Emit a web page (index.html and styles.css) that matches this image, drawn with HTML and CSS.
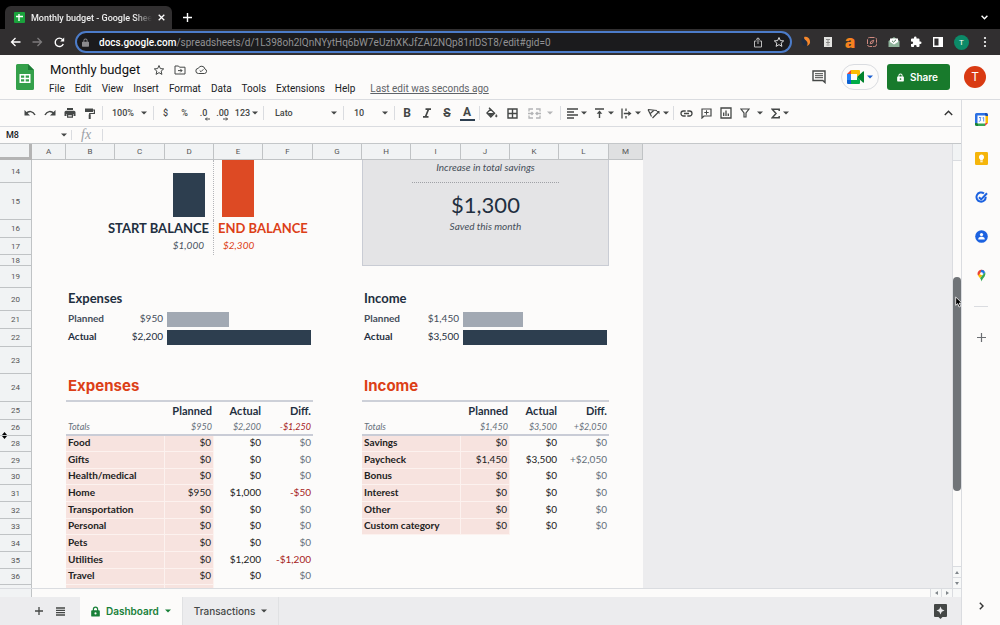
FILE: index.html
```
<!DOCTYPE html>
<html lang="en">
<head>
  <meta charset="UTF-8">
  <meta name="viewport" content="width=device-width, initial-scale=1.0">
  <title>Monthly budget - Google Sheets</title>
  <link rel="stylesheet" href="styles.css">
</head>
<body>
  <svg class="sprite" aria-hidden="true">
    <symbol id="caret" viewBox="0 0 6 4"><path d="M0 0.5h6L3 3.5z"/></symbol>
    <symbol id="lock" viewBox="0 0 10 12"><path fill-rule="evenodd" d="M1.2 4.6H2V3.4a3 3 0 0 1 6 0v1.2h.8a1 1 0 0 1 1 1v5a1 1 0 0 1-1 1H1.2a1 1 0 0 1-1-1v-5a1 1 0 0 1 1-1zM3.3 4.6h3.4V3.4a1.7 1.7 0 0 0-3.4 0zM5 6.9a1.2 1.2 0 1 0 0 2.4 1.2 1.2 0 0 0 0-2.4z"/></symbol>
    <symbol id="star" viewBox="0 0 24 24"><path d="M12 3l2.7 6.2 6.7.6-5.1 4.4 1.5 6.6-5.8-3.5-5.8 3.5 1.5-6.6L2.600 9.800l6.700-.6z" fill="none" stroke="currentColor" stroke-width="2"/></symbol>
  </svg>

  <!-- Browser -->
  <div class="tabstrip">
    <div class="browser-tab">
      <svg width="11" height="11" viewBox="0 0 11 11"><rect width="11" height="11" rx="1" fill="#1aa23c"/><path d="M5 2v7M2 4.500h7" stroke="#fff" stroke-width="1.400"/></svg>
      <span class="tab-title">Monthly budget - Google Shee</span>
      <button class="plain" aria-label="Close tab"><svg width="7" height="7" viewBox="0 0 7 7"><path d="M.7.7l5.600 5.600M6.300.7L.7 6.300" stroke="#fff" stroke-width="1.300"/></svg></button>
    </div>
    <button class="plain new-tab" aria-label="New tab"><svg width="9" height="9" viewBox="0 0 9 9"><path d="M4.500 0v9M0 4.500h9" stroke="#fff" stroke-width="1.400"/></svg></button>
    <button class="plain tab-search" aria-label="Search tabs"><svg width="7" height="5" viewBox="0 0 7 5"><path d="M.6.8l2.900 2.900L6.400.8" fill="none" stroke="#fff" stroke-width="1.400"/></svg></button>
  </div>
  <div class="browser-bar">
    <button class="plain nav" aria-label="Back"><svg width="11" height="10" viewBox="0 0 11 10"><path d="M10.500 5H1.500M5.500 1l-4 4 4 4" fill="none" stroke="#fff" stroke-width="1.300"/></svg></button>
    <button class="plain nav" aria-label="Forward"><svg width="11" height="10" viewBox="0 0 11 10"><path d="M.5 5h9M5.500 1l4 4-4 4" fill="none" stroke="#7d7b7c" stroke-width="1.300"/></svg></button>
    <button class="plain nav" aria-label="Reload"><svg width="11" height="11" viewBox="0 0 11 11"><path d="M9.300 7A4.200 4.200 0 1 1 8.600 2.600" fill="none" stroke="#fff" stroke-width="1.400"/><path d="M10.200.5v4H6.200z" fill="#fff"/></svg></button>
    <div class="omnibox">
      <svg width="7" height="9" viewBox="0 0 10 12" fill="#8b8b8d"><path fill-rule="evenodd" d="M1 5h1V3.400a3 3 0 0 1 6 0V5h1a1 1 0 0 1 1 1v5a1 1 0 0 1-1 1H1a1 1 0 0 1-1-1V6a1 1 0 0 1 1-1zm2.300 0h3.400V3.400a1.700 1.700 0 0 0-3.400 0z"/></svg>
      <span class="url"><b>docs.google.com</b>/spreadsheets/d/1L398oh2lQnNYytHq6bW7eUzhXKJfZAl2NQp81rlDST8/edit#gid=0</span>
      <button class="plain" aria-label="Share page"><svg width="10" height="11" viewBox="0 0 10 11" fill="none" stroke="#bbb"><path d="M3.500 4H1.500v6h7V4h-2M5 7V1M3 2.700L5 .8l2 1.900"/></svg></button>
      <button class="plain" aria-label="Bookmark"><svg width="12" height="12" color="#ddd"><use href="#star"/></svg></button>
    </div>
    <div class="extensions">
      <svg width="12" height="12" viewBox="0 0 12 12"><path d="M4 1.500a4.500 4.500 0 0 0 2 8.500L7 6z" fill="#1f2c40"/><path d="M4.500.8a4.800 4.800 0 0 1 2.500 9.200c1-2.500.8-4-1-5.500S3.500 2 4.500.8z" fill="#f6872b"/></svg>
      <svg width="12" height="12" viewBox="0 0 12 12"><path d="M2 1h8v10H2z" fill="#e4e4e2"/><path d="M4 3.500h4M6 4v4M4 6.500h4M4.500 9h3" stroke="#777" stroke-width=".8"/></svg>
      <span class="ext-a">a</span>
      <svg width="12" height="12" viewBox="0 0 12 12" fill="none" stroke="#d08a80"><rect x="1.500" y="1.500" width="9" height="9" rx="2" stroke-dasharray="5 1"/><path d="M4.200 7.800l.6-2.300 3-1.300-1.300 3z"/></svg>
      <svg width="12" height="12" viewBox="0 0 12 12"><path d="M.5 5L6 1l5.500 4v6H.5z" fill="#8fb49b"/><path d="M2 2.500h8V6L6 8.500 2 6z" fill="#fff"/><path d="M4 4.800l1.500 1.400L8 3.800" fill="none" stroke="#547a61"/></svg>
      <svg width="12" height="12" viewBox="0 0 24 24" fill="#fff"><path d="M20.500 11H19V7a2 2 0 0 0-2-2h-4V3.500a2.500 2.500 0 0 0-5 0V5H4a2 2 0 0 0-2 2v3.800h1.500a2.700 2.700 0 0 1 0 5.400H2V20a2 2 0 0 0 2 2h3.800v-1.500a2.700 2.700 0 0 1 5.400 0V22H17a2 2 0 0 0 2-2v-4h1.500a2.500 2.500 0 0 0 0-5z"/></svg>
      <svg width="12" height="12" viewBox="0 0 12 12"><path d="M1.700 1.700h8.600v8.600H1.700z" fill="none" stroke="#fff" stroke-width="1.400"/><path d="M6.500 1.500H10v9H6.500z" fill="#fff"/></svg>
      <span class="profile">T</span>
      <svg width="12" height="12" viewBox="0 0 12 12" fill="#fff"><circle cx="6" cy="2" r="1.100"/><circle cx="6" cy="6" r="1.100"/><circle cx="6" cy="10" r="1.100"/></svg>
    </div>
  </div>

  <!-- Document header -->
  <header class="doc-header">
    <svg class="logo" width="18" height="26" viewBox="0 0 18 26"><path d="M1.500 0H12l6 6v18.500a1.500 1.500 0 0 1-1.500 1.500h-15A1.500 1.500 0 0 1 0 24.500v-23A1.500 1.500 0 0 1 1.500 0z" fill="#34a04a"/><path d="M12 0l6 6h-6z" fill="#1d7c36"/><path d="M3.500 10h11v9h-11zM5 11.500v2.200h3.200v-2.200zM9.700 11.500v2.200H13v-2.200zM5 15.200v2.300h3.200v-2.300zM9.700 15.200v2.300H13v-2.300z" fill="#fff" fill-rule="evenodd"/></svg>
    <div class="doc-info">
      <div class="title-row">
        <h1>Monthly budget</h1>
        <button class="plain" aria-label="Star"><svg width="12" height="12"><use href="#star"/></svg></button>
        <button class="plain" aria-label="Move"><svg width="12" height="10" viewBox="0 0 12 10" fill="none" stroke="currentColor"><path d="M1 1h3.500l1 1.200H11V9H1zM4 5.600h4M6.300 3.900L8 5.600 6.300 7.300"/></svg></button>
        <button class="plain" aria-label="Saved to Drive"><svg width="13" height="10" viewBox="0 0 13 10" fill="none" stroke="currentColor"><path d="M3.500 8.500h6a2.300 2.300 0 0 0 .4-4.500A3.400 3.400 0 0 0 3.400 3.300a2.600 2.600 0 0 0 .1 5.200zM4.700 5.500L6 6.700l2.400-2.400"/></svg></button>
      </div>
      <nav class="menu">
        <button class="plain">File</button>
        <button class="plain">Edit</button>
        <button class="plain">View</button>
        <button class="plain">Insert</button>
        <button class="plain">Format</button>
        <button class="plain">Data</button>
        <button class="plain">Tools</button>
        <button class="plain">Extensions</button>
        <button class="plain">Help</button>
        <a class="last-edit" href="#">Last edit was seconds ago</a>
      </nav>
    </div>
    <button class="plain" aria-label="Comments"><svg width="14" height="14" viewBox="0 0 14 14"><path d="M1 1h12v11.500L10.800 10.500H1z" fill="none" stroke="#444746" stroke-width="1.400"/><path d="M3 3.700h8M3 5.700h8M3 7.700h8" stroke="#444746"/></svg></button>
    <button class="meet" aria-label="Meet">
      <svg width="18" height="14" viewBox="0 0 18 14"><path d="M0 4l4-4v4z" fill="#e94235"/><path d="M4 0h8a1 1 0 0 1 1 1v3.500L10 7V4H4z" fill="#fbbc04"/><path d="M0 4h4v6H0z" fill="#2684fc"/><path d="M0 10h4v4H1a1 1 0 0 1-1-1z" fill="#0b5fd0"/><path d="M4 10h6V7l3 2.500V13a1 1 0 0 1-1 1H4z" fill="#00ac47"/><path d="M10 7l6-5.500c.5-.4 1-.1 1 .5v10c0 .6-.5.9-1 .5z" fill="#00832d"/></svg>
      <svg class="caret"><use href="#caret"/></svg>
    </button>
    <button class="share"><svg width="7" height="9" fill="#fff"><use href="#lock"/></svg>Share</button>
    <span class="avatar">T</span>
  </header>

  <div class="workspace">
    <main class="editor">
      <div class="toolbar">
        <button class="tool" aria-label="Undo"><svg width="12" height="8" viewBox="0 0 12 8"><path d="M2 4.500C5 1.500 9 2 11 6" fill="none" stroke="#444746" stroke-width="1.500"/><path d="M.5 1v5.500H6z" fill="#444746"/></svg></button>
        <button class="tool" aria-label="Redo"><svg width="12" height="8" viewBox="0 0 12 8"><path d="M10 4.500C7 1.500 3 2 1 6" fill="none" stroke="#444746" stroke-width="1.500"/><path d="M11.500 1v5.500H6z" fill="#444746"/></svg></button>
        <button class="tool" aria-label="Print"><svg width="12" height="12" viewBox="0 0 12 12" fill="#444746"><path d="M3 1h6v2H3zM2 3.700h8a1.500 1.500 0 0 1 1.500 1.500V9H9.500V7h-7v2H.5V5.200A1.500 1.500 0 0 1 2 3.700z"/><path d="M3.600 7.700h4.800v2.500H3.600z" fill="none" stroke="#444746" stroke-width="1.200"/></svg></button>
        <button class="tool" aria-label="Paint format"><svg width="10" height="11" viewBox="0 0 10 11"><path d="M0 .5h8v3.500H0z" fill="#444746"/><path d="M8 2h1.400v3.500H4.700V7" fill="none" stroke="#444746" stroke-width="1.200"/><path d="M3.700 6.500h2V11h-2z" fill="#444746"/></svg></button>
        <span class="sep"></span>
        <label class="drop zoom"><select aria-label="Zoom"><option>100%</option></select><svg class="caret"><use href="#caret"/></svg></label>
        <span class="sep"></span>
        <button class="tool narrow" aria-label="Currency">$</button>
        <button class="tool narrow" aria-label="Percent">%</button>
        <button class="tool narrow decimals" aria-label="Decrease decimals">.0<svg width="6" height="4" viewBox="0 0 6 4"><path d="M6 2H1.500M3 .5L1.500 2 3 3.500" fill="none" stroke="#444746"/></svg></button>
        <button class="tool narrow decimals" aria-label="Increase decimals">.00<svg width="6" height="4" viewBox="0 0 6 4"><path d="M0 2h4.500M3 .5L4.500 2 3 3.500" fill="none" stroke="#444746"/></svg></button>
        <button class="tool formats">123<svg class="caret"><use href="#caret"/></svg></button>
        <span class="sep"></span>
        <label class="drop font"><select aria-label="Font"><option>Lato</option></select><svg class="caret"><use href="#caret"/></svg></label>
        <span class="sep"></span>
        <label class="drop size"><select aria-label="Font size"><option>10</option></select><svg class="caret"><use href="#caret"/></svg></label>
        <span class="sep"></span>
        <button class="tool glyph">B</button>
        <button class="tool" aria-label="Italic"><svg width="10" height="10" viewBox="0 0 10 10"><path d="M3.500 1.200H9M1 8.800h5.500M6.500 1.200L3.500 8.800" stroke="#444746" stroke-width="1.700"/></svg></button>
        <button class="tool glyph strike">S</button>
        <button class="tool glyph"><span class="text-color">A</span></button>
        <span class="sep"></span>
        <button class="tool" aria-label="Fill color"><svg width="12" height="12" viewBox="0 0 12 12"><path d="M3 .8l1.200 1.200M4.600 2.200l4 4-3.800 3.800-4-4z" fill="none" stroke="#444746" stroke-width="1.300"/><path d="M1.500 6h7L4.800 9.600z" fill="#444746"/><path d="M10.300 7.500c1 1.300 1 2.500 0 2.500s-1-1.200 0-2.500z" fill="#444746" stroke="#444746" stroke-width=".6"/></svg></button>
        <button class="tool" aria-label="Borders"><svg width="11" height="11" viewBox="0 0 11 11"><path d="M1 1h9v9H1zM5.500 1v9M1 5.500h9" fill="none" stroke="#444746" stroke-width="1.400"/></svg></button>
        <button class="tool merge" aria-label="Merge cells"><svg width="13" height="11" viewBox="0 0 13 11" fill="none" stroke="#b3b4b6" stroke-width="1.300"><path d="M1 3.500V1h4M8 1h4v2.500M1 7.500V10h4M8 10h4V7.500M0 5.500h4.500M8.500 5.500H13M3.500 4L5 5.500 3.500 7M9.500 4L8 5.500 9.500 7"/></svg><svg class="caret faded"><use href="#caret"/></svg></button>
        <span class="sep"></span>
        <button class="tool menu-tool" aria-label="Horizontal align"><svg width="11" height="11" viewBox="0 0 11 11"><path d="M0 1h11M0 4h7M0 7h11M0 10h7" stroke="#444746" stroke-width="1.300"/></svg><svg class="caret"><use href="#caret"/></svg></button>
        <button class="tool menu-tool" aria-label="Vertical align"><svg width="11" height="11" viewBox="0 0 11 11"><path d="M1 1h9M5.500 10V4.500" stroke="#444746" stroke-width="1.400"/><path d="M5.500 2.500L8.300 5.700H2.700z" fill="#444746"/></svg><svg class="caret"><use href="#caret"/></svg></button>
        <button class="tool menu-tool" aria-label="Text wrapping"><svg width="11" height="11" viewBox="0 0 11 11"><path d="M1 .5v10M5 .5V3M5 8v2.500M2.800 5.500h6" stroke="#444746" stroke-width="1.300"/><path d="M7.300 3L10.500 5.500 7.300 8z" fill="#444746"/></svg><svg class="caret"><use href="#caret"/></svg></button>
        <button class="tool menu-tool" aria-label="Text rotation"><svg width="13" height="11" viewBox="0 0 13 11"><path d="M1 1.500l9 1M1 1.500L4.500 8.500M7 2.200L3 5.700M5.500 10l6-6" fill="none" stroke="#444746" stroke-width="1.200"/><path d="M12.500 3v3.200L9.300 3z" fill="#444746"/></svg><svg class="caret"><use href="#caret"/></svg></button>
        <span class="sep"></span>
        <button class="tool" aria-label="Insert link"><svg width="13" height="7" viewBox="0 0 13 7"><path d="M5.700 1H3.500a2.500 2.500 0 0 0 0 5h2.200M7.300 1h2.200a2.500 2.500 0 0 1 0 5H7.300M4 3.500h5" fill="none" stroke="#444746" stroke-width="1.300"/></svg></button>
        <button class="tool" aria-label="Insert comment"><svg width="11" height="11" viewBox="0 0 11 11"><path d="M1 1h9v7H3L1 10z" fill="none" stroke="#444746" stroke-width="1.200"/><path d="M5.500 2.300v4.400M3.300 4.500h4.400" stroke="#444746"/></svg></button>
        <button class="tool" aria-label="Insert chart"><svg width="12" height="12" viewBox="0 0 12 12"><path d="M1 1h10v10H1z" fill="none" stroke="#444746" stroke-width="1.300"/><path d="M3.700 9V5.500M6 9V3.500M8.300 9V6.500" stroke="#444746" stroke-width="1.300"/></svg></button>
        <button class="tool filter" aria-label="Filter"><svg width="10" height="10" viewBox="0 0 10 10"><path d="M1 1h8L6 5v4H4V5z" fill="none" stroke="#444746" stroke-width="1.200"/></svg><svg class="caret"><use href="#caret"/></svg></button>
        <button class="tool menu-tool" aria-label="Functions"><svg width="9" height="11" viewBox="0 0 9 11"><path d="M8.200 3V1.200H1.200L5 5.500 1.200 9.800h7V8" fill="none" stroke="#444746" stroke-width="1.500"/></svg><svg class="caret"><use href="#caret"/></svg></button>
        <button class="tool collapse" aria-label="Hide menus"><svg width="9" height="6" viewBox="0 0 9 6"><path d="M.8 5L4.500 1.300 8.200 5" fill="none" stroke="#333" stroke-width="1.400"/></svg></button>
      </div>

      <div class="formula-bar">
        <label class="name-box"><input type="text" value="M8" aria-label="Name box"><svg class="caret"><use href="#caret"/></svg></label>
        <label class="fx" for="formula">fx</label>
        <input id="formula" class="formula" type="text">
      </div>

      <div class="sheet">
        <table class="grid">
          <colgroup>
            <col class="c-head"><col class="c-edge"><col class="c-49"><col class="c-50"><col class="c-49"><col class="c-49"><col class="c-50"><col class="c-49"><col class="c-49"><col class="c-50"><col class="c-49"><col class="c-49"><col class="c-50"><col class="c-edge">
          </colgroup>
          <thead>
            <tr><th class="corner"></th><th>A</th><th>B</th><th>C</th><th>D</th><th>E</th><th>F</th><th>G</th><th>H</th><th>I</th><th>J</th><th>K</th><th>L</th><th class="active">M</th></tr>
          </thead>
          <tbody>
            <tr class="h-23"><th>14</th><td></td>
              <td class="column-cell start" colspan="3" rowspan="2"><div class="column start-column"></div></td>
              <td class="column-cell" colspan="2" rowspan="2"><div class="column end-column"></div></td>
              <td></td>
              <td class="savings" colspan="5" rowspan="5">
                <p class="caption">Increase in total savings</p>
                <p class="amount">$1,300</p>
                <p class="caption">Saved this month</p>
              </td><td></td></tr>
            <tr class="h-37"><th>15</th><td></td><td></td><td></td></tr>
            <tr class="h-18"><th>16</th><td></td><td class="balance start" colspan="3">START BALANCE</td><td class="balance end" colspan="2">END BALANCE</td><td></td><td></td></tr>
            <tr class="h-17"><th>17</th><td></td><td class="balance-value start" colspan="3">$1,000</td><td class="balance-value end" colspan="2">$2,300</td><td></td><td></td></tr>
            <tr class="h-11"><th>18</th><td></td><td colspan="5"></td><td></td><td></td></tr>
            <tr class="h-22"><th>19</th><td colspan="13"></td></tr>
            <tr class="h-23"><th>20</th><td></td><td class="subtitle" colspan="5">Expenses</td><td></td><td class="subtitle" colspan="5">Income</td><td></td></tr>
            <tr class="h-18"><th>21</th><td></td>
              <td class="label soft">Planned</td><td class="num soft">$950</td><td class="bar-cell" colspan="3"><div class="bar planned" style="width: 43.2%"></div></td><td></td>
              <td class="label soft">Planned</td><td class="num soft">$1,450</td><td class="bar-cell" colspan="3"><div class="bar planned" style="width: 41.4%"></div></td><td></td></tr>
            <tr class="h-18"><th>22</th><td></td>
              <td class="label dark">Actual</td><td class="num dark">$2,200</td><td class="bar-cell" colspan="3"><div class="bar" style="width: 100%"></div></td><td></td>
              <td class="label dark">Actual</td><td class="num dark">$3,500</td><td class="bar-cell" colspan="3"><div class="bar" style="width: 100%"></div></td><td></td></tr>
            <tr class="h-27"><th>23</th><td colspan="13"></td></tr>
            <tr class="h-28"><th>24</th><td></td><td class="section" colspan="5">Expenses</td><td></td><td class="section" colspan="5">Income</td><td></td></tr>
            <tr class="h-18 heads"><th>25</th><td></td>
              <td colspan="2"></td><td>Planned</td><td>Actual</td><td>Diff.</td><td></td>
              <td colspan="2"></td><td>Planned</td><td>Actual</td><td>Diff.</td><td></td></tr>
            <tr class="h-16 totals"><th><svg class="hidden-mark" viewBox="0 0 5 3" preserveAspectRatio="xMidYMax"><path d="M0 3h5L2.500 0z"/></svg>26</th><td class="none"></td>
              <td class="name" colspan="2">Totals</td><td>$950</td><td>$2,200</td><td class="neg">-$1,250</td><td class="none"></td>
              <td class="name" colspan="2">Totals</td><td>$1,450</td><td>$3,500</td><td>+$2,050</td><td class="none"></td></tr>
            <tr class="h-16"><th><svg class="hidden-mark" viewBox="0 0 5 3" preserveAspectRatio="xMidYMin"><path d="M0 0h5L2.500 3z"/></svg>28</th><td></td>
              <td class="cat" colspan="2">Food</td><td class="plan">$0</td><td class="num">$0</td><td class="diff">$0</td><td></td>
              <td class="cat" colspan="2">Savings</td><td class="plan">$0</td><td class="num">$0</td><td class="diff">$0</td><td></td></tr>
            <tr class="h-17"><th>29</th><td></td>
              <td class="cat" colspan="2">Gifts</td><td class="plan">$0</td><td class="num">$0</td><td class="diff">$0</td><td></td>
              <td class="cat" colspan="2">Paycheck</td><td class="plan">$1,450</td><td class="num">$3,500</td><td class="diff">+$2,050</td><td></td></tr>
            <tr class="h-16"><th>30</th><td></td>
              <td class="cat" colspan="2">Health/medical</td><td class="plan">$0</td><td class="num">$0</td><td class="diff">$0</td><td></td>
              <td class="cat" colspan="2">Bonus</td><td class="plan">$0</td><td class="num">$0</td><td class="diff">$0</td><td></td></tr>
            <tr class="h-17"><th>31</th><td></td>
              <td class="cat" colspan="2">Home</td><td class="plan">$950</td><td class="num">$1,000</td><td class="diff neg">-$50</td><td></td>
              <td class="cat" colspan="2">Interest</td><td class="plan">$0</td><td class="num">$0</td><td class="diff">$0</td><td></td></tr>
            <tr class="h-17"><th>32</th><td></td>
              <td class="cat" colspan="2">Transportation</td><td class="plan">$0</td><td class="num">$0</td><td class="diff">$0</td><td></td>
              <td class="cat" colspan="2">Other</td><td class="plan">$0</td><td class="num">$0</td><td class="diff">$0</td><td></td></tr>
            <tr class="h-16"><th>33</th><td></td>
              <td class="cat" colspan="2">Personal</td><td class="plan">$0</td><td class="num">$0</td><td class="diff">$0</td><td></td>
              <td class="cat" colspan="2">Custom category</td><td class="plan">$0</td><td class="num">$0</td><td class="diff">$0</td><td></td></tr>
            <tr class="h-17"><th>34</th><td></td><td class="cat" colspan="2">Pets</td><td class="plan">$0</td><td class="num">$0</td><td class="diff">$0</td><td colspan="7"></td></tr>
            <tr class="h-17"><th>35</th><td></td><td class="cat" colspan="2">Utilities</td><td class="plan">$0</td><td class="num">$1,200</td><td class="diff neg">-$1,200</td><td colspan="7"></td></tr>
            <tr class="h-16"><th>36</th><td></td><td class="cat" colspan="2">Travel</td><td class="plan">$0</td><td class="num">$0</td><td class="diff">$0</td><td colspan="7"></td></tr>
            <tr class="h-16"><th></th><td></td><td class="cat" colspan="2"></td><td class="plan"></td><td colspan="9"></td></tr>
          </tbody>
        </table>
        <div class="v-scroll">
          <div class="v-top"></div>
          <div class="track"><div class="before"></div><div class="thumb"></div><div class="after"></div></div>
          <button class="arrow" aria-label="Scroll up"><svg width="4" height="3" viewBox="0 0 4 3"><path d="M0 3h4L2 0z"/></svg></button>
          <button class="arrow" aria-label="Scroll down"><svg width="4" height="3" viewBox="0 0 4 3"><path d="M0 0h4L2 3z"/></svg></button>
        </div>
        <svg class="pointer" width="8" height="12" viewBox="0 0 8 12"><path d="M.7 1v8.300l2-1.700 1.400 3.400 1.600-.7-1.400-3.200H7z" fill="#000" stroke="#fff" stroke-width=".8"/></svg>
      </div>
      <div class="h-scroll">
        <div class="h-head"></div>
        <div class="h-track"></div>
        <button class="arrow" aria-label="Scroll left"><svg width="3" height="4" viewBox="0 0 3 4"><path d="M3 0v4L0 2z"/></svg></button>
        <button class="arrow" aria-label="Scroll right"><svg width="3" height="4" viewBox="0 0 3 4"><path d="M0 0v4l3-2z"/></svg></button>
        <div class="h-corner"></div>
      </div>

      <footer class="sheet-tabs">
        <button class="plain" aria-label="Add sheet"><svg width="8" height="8" viewBox="0 0 8 8"><path d="M4 0v8M0 4h8" stroke="#444746" stroke-width="1.300"/></svg></button>
        <button class="plain" aria-label="All sheets"><svg width="9" height="9" viewBox="0 0 9 9"><path d="M0 1h9M0 3.300h9M0 5.700h9M0 8h9" stroke="#444746" stroke-width="1.300"/></svg></button>
        <button class="sheet-tab current"><svg width="9" height="11" fill="#188038"><use href="#lock"/></svg>Dashboard<svg class="caret"><use href="#caret"/></svg></button>
        <button class="sheet-tab">Transactions<svg class="caret"><use href="#caret"/></svg></button>
        <button class="plain explore" aria-label="Explore"><svg width="13" height="15" viewBox="0 0 13 15"><path fill-rule="evenodd" d="M1 0h11a1 1 0 0 1 1 1v11a1 1 0 0 1-1 1H8.500l-2 2-2-2H1a1 1 0 0 1-1-1V1a1 1 0 0 1 1-1zm5.500 2.500L5.300 5.300 2.500 6.500l2.800 1.200 1.200 2.800 1.200-2.800 2.800-1.200-2.800-1.200z" fill="#444746"/></svg></button>
      </footer>
    </main>

    <aside class="side-panel">
      <svg width="13" height="13" viewBox="0 0 13 13"><path d="M0 1.500A1.500 1.500 0 0 1 1.500 0H10v3H3v7H0z" fill="#2b70e4"/><path d="M10 0h1.500A1.500 1.500 0 0 1 13 1.500V3h-3z" fill="#174fb8"/><path d="M10 3h3v7h-3z" fill="#fbbc04"/><path d="M3 10h7v3H3z" fill="#34a853"/><path d="M0 10h3v3H1.500A1.500 1.500 0 0 1 0 11.500z" fill="#188038"/><path d="M10 10h3l-3 3z" fill="#ea4335"/><path d="M2.500 2.500h8v8h-8z" fill="#fff"/><path d="M4 4.500h1.800L5 6.200c1.200.1 1 2.300-1.200 2M7.500 5l1.200-.5v4" fill="none" stroke="#2b70e4" stroke-width=".8"/></svg>
      <svg width="13" height="13" viewBox="0 0 13 13"><rect width="13" height="13" rx="1.200" fill="#f5b50a"/><path d="M6.500 2.500a2.700 2.700 0 0 1 1.300 5V8.500H5.200v-1a2.700 2.700 0 0 1 1.300-5zM5.300 9.200h2.400v1H5.300z" fill="#fff"/></svg>
      <svg width="13" height="13" viewBox="0 0 13 13"><path d="M9 2.500A4.600 4.600 0 1 0 10.700 5.800" fill="none" stroke="#1c62e0" stroke-width="2"/><path d="M4 6.200l2.200 2.200L12 2.200" fill="none" stroke="#1c62e0" stroke-width="2"/></svg>
      <svg width="13" height="13" viewBox="0 0 13 13"><circle cx="6.500" cy="6.500" r="6.300" fill="#1c62e0"/><circle cx="6.500" cy="4.600" r="1.600" fill="#fff"/><path d="M3.300 9.500V8.700c0-1.300 2-1.900 3.200-1.900s3.200.6 3.200 1.900v.8z" fill="#fff"/></svg>
      <svg width="13" height="13" viewBox="0 0 13 13"><path d="M2.500 4.800a4.100 4.100 0 0 0 .6 2L9.400 1.900A4 4 0 0 0 6.500.7a4 4 0 0 0-4 4.100z" fill="#ea4335"/><path d="M6.500.7a4 4 0 0 1 3.700 2.500L7.800 5.500 5.500 2.900z" fill="#1a73e8"/><path d="M10.200 3.200a4.500 4.500 0 0 1-.6 4.300C8.200 9.500 7.300 10 6.500 12.500c-.4-1.500-.8-2.500-1.500-3.400z" fill="#34a853"/><path d="M3.100 6.800L5.300 4l1.900 2.500L5 9.100c-.8-1-1.400-1.400-1.900-2.300z" fill="#fbbc04"/><circle cx="6.500" cy="4.700" r="1.400" fill="#fff"/></svg>
      <hr>
      <button class="plain" aria-label="Get add-ons"><svg width="9" height="9" viewBox="0 0 9 9"><path d="M4.500 0v9M0 4.500h9" stroke="#6b6e72" stroke-width="1.200"/></svg></button>
      <button class="plain hide-panel" aria-label="Hide side panel"><svg width="5" height="8" viewBox="0 0 5 8"><path d="M.8.8L4 4 .8 7.200" fill="none" stroke="#333" stroke-width="1.400"/></svg></button>
    </aside>
  </div>
</body>
</html>
```
FILE: styles.css
```
* {
  box-sizing: border-box;
}
body {
  margin: 0;
  height: 100vh;
  display: flex;
  flex-direction: column;
  overflow: hidden;
  background: #fcfbfa;
  color: #202124;
  font-family: Roboto, sans-serif;
  font-size: 10px;
}
svg {
  display: block;
  flex: none;
}
.sprite {
  position: absolute;
  width: 0;
  height: 0;
}
button, input, select {
  font: inherit;
  color: inherit;
  border: 0;
  margin: 0;
  padding: 0;
  background: none;
}
.plain {
  display: flex;
  align-items: center;
  justify-content: center;
  flex: none;
}
.caret {
  width: 6px;
  height: 4px;
  fill: #444746;
}

/* Browser */
.tabstrip {
  flex: none;
  height: 29px;
  display: flex;
  align-items: center;
  background: #000;
  padding: 6px 12px 0 5px;
}
.browser-tab {
  width: 167px;
  height: 23px;
  display: flex;
  align-items: center;
  gap: 6px;
  padding: 0 8px 0 9px;
  background: #312f30;
  border-radius: 6px 6px 0 0;
  color: #eee;
  font-size: 9px;
  font-weight: 500;
}
.tab-title {
  flex: 1;
  white-space: nowrap;
  -webkit-mask-image: linear-gradient(to right, #000 85%, transparent);
  mask-image: linear-gradient(to right, #000 85%, transparent);
}
.new-tab {
  margin-left: 11px;
}
.tab-search {
  margin-left: auto;
}
.browser-bar {
  flex: none;
  height: 26px;
  display: flex;
  align-items: center;
  background: #312f30;
  padding: 0 9px 0 4px;
}
.nav {
  width: 22px;
}
.omnibox {
  flex: 1;
  min-width: 0;
  height: 22px;
  margin-left: 5px;
  display: flex;
  align-items: center;
  gap: 10px;
  padding: 0 5px;
  border: 2px solid #4c7cc9;
  border-radius: 11px;
  background: #1b1b1d;
}
.url {
  flex: 1;
  overflow: hidden;
  white-space: nowrap;
  color: #929294;
}
.url b {
  color: #fff;
  font-weight: 500;
}
.extensions {
  display: flex;
  align-items: center;
  gap: 10px;
  margin-left: 8px;
}
.ext-a {
  width: 12px;
  text-align: center;
  color: #f5821f;
  font: 900 17px/12px Inter, sans-serif;
}
.profile {
  width: 15px;
  height: 15px;
  border-radius: 50%;
  background: #0c8a68;
  color: #fff;
  font-size: 8px;
  line-height: 15px;
  text-align: center;
}

/* Document header */
.doc-header {
  flex: none;
  height: 45px;
  display: flex;
  align-items: center;
  padding: 0 14px 0 16px;
  border-bottom: 1px solid #dadce0;
}
.logo {
  margin-right: 15px;
}
.doc-info {
  flex: 1;
  padding-top: 4px;
}
.title-row {
  display: flex;
  align-items: center;
  gap: 9px;
  color: #444746;
}
.title-row h1 {
  margin: 0 4px 0 1px;
  color: #111;
  font-size: 13px;
  font-weight: 400;
  line-height: 18px;
}
.menu {
  display: flex;
  align-items: center;
  gap: 10px;
  height: 18px;
}
.last-edit {
  margin-left: 5px;
  color: #5f6368;
}
.meet {
  width: 38px;
  height: 26px;
  margin: 0 8px 0 15px;
  display: flex;
  align-items: center;
  justify-content: center;
  gap: 2px;
  border: 1px solid #dadce0;
  border-radius: 13px;
}
.meet .caret {
  fill: #1a5fd0;
}
.share {
  height: 26px;
  padding: 0 12px 0 10px;
  display: flex;
  align-items: center;
  gap: 6px;
  border-radius: 3px;
  background: #187a2c;
  color: #fff;
  font: 600 10px Inter, sans-serif;
}
.avatar {
  width: 22px;
  height: 22px;
  margin-left: 14px;
  border-radius: 50%;
  background: #d93a12;
  color: #fff;
  font-size: 12px;
  line-height: 22px;
  text-align: center;
}

.workspace {
  flex: 1;
  min-height: 0;
  display: flex;
}
.editor {
  flex: 1;
  min-width: 0;
  display: flex;
  flex-direction: column;
}

/* Toolbar */
.toolbar {
  flex: none;
  height: 27px;
  display: flex;
  align-items: center;
  padding: 0 3px 0 20px;
  border-bottom: 1px solid #dadce0;
  color: #444746;
  font-size: 9px;
  font-weight: 500;
}
.tool {
  width: 20px;
  height: 20px;
  display: flex;
  align-items: center;
  justify-content: center;
  gap: 3px;
}
.narrow {
  width: 19px;
}
.decimals {
  flex-direction: column;
  gap: 0;
  line-height: 8px;
  padding-top: 4px;
}
.decimals svg {
  margin-left: 6px;
}
.formats {
  width: 29px;
  gap: 2px;
}
.menu-tool {
  width: 27px;
}
.merge {
  width: 36px;
  gap: 6px;
}
.filter {
  width: 30px;
  gap: 7px;
}
.faded {
  fill: #b3b4b6;
}
.glyph {
  font: 700 12px Roboto, sans-serif;
}
.strike {
  text-decoration: line-through;
}
.text-color {
  width: 15px;
  line-height: 13px;
  border-bottom: 2px solid #2c3e50;
}
.sep {
  width: 1px;
  height: 14px;
  margin: 0 2px;
  background: #dadce0;
}
.drop {
  display: flex;
  align-items: center;
  padding-right: 4px;
}
.drop select {
  flex: 1;
  min-width: 0;
  appearance: none;
}
.zoom {
  width: 46px;
  padding-left: 7px;
}
.font {
  width: 75px;
  padding-left: 9px;
}
.size {
  width: 46px;
  padding-left: 8px;
}
.collapse {
  margin-left: auto;
}

/* Formula bar */
.formula-bar {
  flex: none;
  height: 17px;
  display: flex;
  align-items: center;
  border-bottom: 1px solid #c4c7c9;
}
.name-box {
  width: 72px;
  display: flex;
  align-items: center;
  padding: 0 4px 0 6px;
  border-right: 1px solid #dadce0;
  font-size: 9px;
  font-weight: 500;
}
.name-box input {
  flex: 1;
  min-width: 0;
}
.fx {
  width: 31px;
  padding-left: 9px;
  border-right: 1px solid #dadce0;
  color: #9aa0a6;
  font: italic 14px/12px "Liberation Serif", serif;
}
.formula {
  flex: 1;
}

/* Spreadsheet */
.sheet {
  position: relative;
  flex: 1;
  min-height: 0;
  display: flex;
  align-items: flex-start;
  overflow: hidden;
  background: #ececee;
}
.grid {
  width: 643px;
  flex: none;
  table-layout: fixed;
  border-collapse: separate;
  border-spacing: 0;
  background: #fcfbfa;
  color: #222;
  font: 10px/11px Lato, sans-serif;
}
.c-head { width: 32px; }
.c-edge { width: 34px; }
.c-49 { width: 49px; }
.c-50 { width: 50px; }
.h-11 { height: 11px; }
.h-16 { height: 16px; }
.h-17 { height: 17px; }
.h-18 { height: 18px; }
.h-22 { height: 22px; }
.h-23 { height: 23px; }
.h-27 { height: 27px; }
.h-28 { height: 28px; }
.h-37 { height: 37px; }
.grid td, .grid th {
  padding: 0 2px;
  white-space: nowrap;
}
.grid td {
  padding-bottom: 2px;
}
.grid th {
  background: #f1f3f4;
  border: solid #c0c3c5;
  border-width: 0 1px 1px 0;
  color: #555;
  font: 8px/9px Roboto, sans-serif;
}
.grid thead th {
  height: 16px;
}
.grid .corner {
  border: solid #b4b4b4;
  border-width: 0 3px 3px 0;
}
.grid .active {
  background: #dfe0e1;
}
.hidden-mark {
  float: left;
  width: 5px;
  height: 15px;
  margin: -3px -5px -3px 0;
  fill: #000;
}
.grid .column-cell {
  vertical-align: bottom;
  padding: 0 8px 3px;
}
.start {
  border-right: 1px dotted #b5b6ba;
  text-align: right;
}
.column {
  width: 32px;
}
.start-column {
  height: 44px;
  margin-left: auto;
  background: #2d3e4f;
}
.end-column {
  height: 57px;
  background: #dd4a24;
}
.balance {
  color: #1f2f40;
  font-size: 13px;
  font-weight: 700;
}
.grid td.balance {
  padding: 0 4px 2px;
}
.balance-value {
  color: #4a5562;
  font-style: italic;
}
.grid td.balance-value {
  padding: 0 9px 3px;
}
.grid .end {
  color: #dc3f17;
}
.grid .savings {
  vertical-align: top;
  padding: 2px 49px 0;
  background: #e4e4e6;
  border: solid #c9ccd4;
  border-width: 0 1px 1px;
  text-align: center;
}
.caption {
  margin: 0;
  color: #444e59;
  font-style: italic;
}
.amount {
  margin: 9px 0 2px;
  padding-top: 8px;
  border-top: 1px dotted #9fa1a6;
  color: #1f2f40;
  font-size: 22px;
  line-height: 28px;
}
.subtitle {
  color: #1f2f40;
  font-size: 13px;
  font-weight: 700;
}
.label {
  font-weight: 700;
}
.num, .diff, .plan {
  text-align: right;
}
.label, .num, .diff {
  border-bottom: 1px solid transparent;
}
.soft {
  color: #454e5b;
}
.dark {
  color: #1f2f40;
}
.bar {
  height: 15px;
  background: #2d3e4f;
}
.planned {
  background: #a2a9b3;
}
.section {
  border-bottom: 2px solid #cdd0d8;
  color: #dc3f17;
  font: 700 15px/20px Inter, sans-serif;
}
.heads td {
  color: #1f2f40;
  font-size: 11px;
  font-weight: 700;
  text-align: right;
}
.totals td {
  border-bottom: 2px solid #c9ccd6;
  color: #66707b;
  font-size: 9px;
  font-style: italic;
  text-align: right;
}
.totals .name {
  text-align: left;
}
.totals .none {
  border-bottom: 0;
}
.cat, .plan {
  background: #f7e3df;
  border-right: 1px solid #fcf2ef;
  border-bottom: 1px solid #fcf2ef;
}
.cat {
  font-weight: 700;
}
.diff {
  color: #66707b;
}
.grid .neg {
  color: #a61c1c;
}

/* Scrollbars */
.v-scroll {
  width: 9px;
  height: 100%;
  margin-left: auto;
  display: flex;
  flex-direction: column;
  background: #fcfbfa;
  border-left: 1px solid #dadce0;
}
.v-top {
  height: 17px;
  background: #f1f3f4;
  border-bottom: 1px solid #dadce0;
}
.track {
  flex: 1;
  display: flex;
  flex-direction: column;
}
.before { flex: 117; }
.thumb {
  flex: 215;
  border-radius: 4px;
  background: #707478;
}
.after { flex: 75; }
.arrow {
  height: 11px;
  display: flex;
  align-items: center;
  justify-content: center;
  border-top: 1px solid #dadce0;
  background: #f7f8f8;
  fill: #80868b;
}
.pointer {
  position: absolute;
  right: -2px;
  top: 152px;
}
.h-scroll {
  flex: none;
  height: 9px;
  display: flex;
  border-top: 1px solid #dadce0;
}
.h-head {
  width: 32px;
  background: #f1f3f4;
  border-right: 1px solid #c0c3c5;
}
.h-track {
  flex: 1;
}
.h-scroll .arrow, .h-corner {
  width: 11px;
  height: 8px;
  border-top: 0;
  border-left: 1px solid #dadce0;
}
.h-corner {
  width: 9px;
  background: #f7f8f8;
}

/* Sheet tabs */
.sheet-tabs {
  flex: none;
  height: 28px;
  display: flex;
  align-items: center;
  gap: 13px;
  padding: 0 14px 0 35px;
  background: #ececee;
}
.sheet-tab {
  height: 28px;
  display: flex;
  align-items: center;
  gap: 6px;
  margin-left: -13px;
  padding: 0 11px;
  border-right: 1px solid #e0e1e3;
  color: #444746;
  font: 500 10px Inter, sans-serif;
}
.current {
  margin-left: 2px;
  background: #fcfbfa;
  color: #188038;
  font-weight: 600;
}
.current .caret {
  fill: #188038;
}
.explore {
  margin-left: auto;
}

/* Side panel */
.side-panel {
  width: 39px;
  display: flex;
  flex-direction: column;
  align-items: center;
  gap: 26px;
  padding: 13px 0 15px;
  border-left: 1px solid #dadce0;
}
.side-panel hr {
  width: 14px;
  height: 1px;
  margin: -2px 0 0;
  border: 0;
  background: #dadce0;
}
.hide-panel {
  margin-top: auto;
}
```
